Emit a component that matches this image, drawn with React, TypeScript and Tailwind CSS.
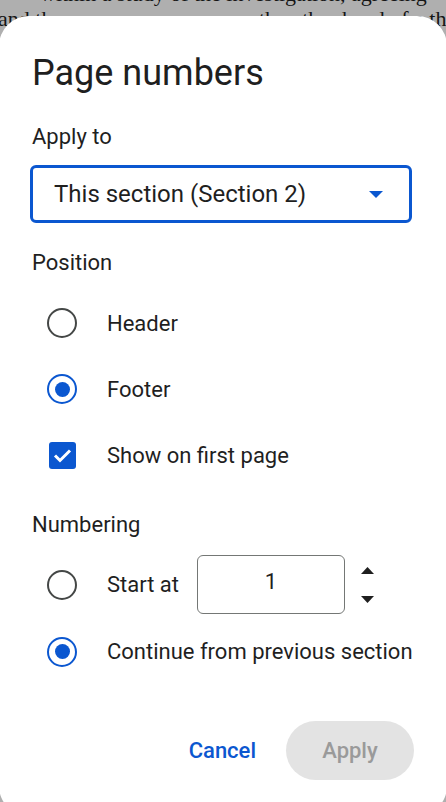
import React from "react";

const font = { fontFamily: "Roboto, 'Noto Sans', sans-serif" };

function Radio({ checked }: { checked?: boolean }) {
  return checked ? (
    <div className="w-[30px] h-[30px] rounded-full border-[2.5px] border-[#0b57d0] flex items-center justify-center">
      <div className="w-[15px] h-[15px] rounded-full bg-[#0b57d0]" />
    </div>
  ) : (
    <div className="w-[30px] h-[30px] rounded-full border-[2.5px] border-[#444746]" />
  );
}

export default function App() {
  return (
    <div className="relative w-[446px] h-[802px] overflow-hidden bg-[#afafaf]" style={font}>
      <div
        className="absolute left-0 top-0 w-[446px] text-[22px] text-[#151515] whitespace-nowrap overflow-hidden"
        style={{ fontFamily: "'Liberation Serif', serif" }}
      >
        <div className="h-[24px] leading-[24px] -mt-[18px] pl-[40px]">within a study of the investigation, agreeing</div>
        <div className="h-[24px] leading-[24px] mt-[1px] -ml-[2px]">and the numerous sources on the other hand of a the survey</div>
      </div>
      <div className="relative mt-[16px] -mx-[1px] h-[800px] rounded-[30px] bg-white px-[33px] pt-[35px]">
        <div className="text-[36px] leading-[44px] text-[#1f1f1f]">Page numbers</div>
        <div className="mt-[28px] text-[22px] leading-[28px] text-[#1f1f1f]">Apply to</div>
        <div className="mt-[14px] -ml-[2px] w-[382px] h-[58px] rounded-[6px] border-[3px] border-[#0b57d0] flex items-center pl-[21px] pr-[26px]">
          <span className="flex-1 text-[24px] text-[#1f1f1f]">This section (Section 2)</span>
          <svg width="14" height="7" viewBox="0 0 14 7">
            <path d="M0 0 L14 0 L7 7 Z" fill="#0b57d0" />
          </svg>
        </div>
        <div className="mt-[26px] text-[22px] leading-[28px] text-[#1f1f1f]">Position</div>
        <div className="mt-[13px]">
          <div className="h-[66px] flex items-center">
            <div className="ml-[15px]"><Radio /></div>
            <span className="ml-[30px] text-[22px] text-[#1f1f1f]">Header</span>
          </div>
          <div className="h-[66px] flex items-center">
            <div className="ml-[15px]"><Radio checked /></div>
            <span className="ml-[30px] text-[22px] text-[#1f1f1f]">Footer</span>
          </div>
          <div className="h-[66px] flex items-center">
            <div className="ml-[17px] w-[27px] h-[27px] rounded-[3px] bg-[#0b57d0] flex items-center justify-center">
              <svg width="19" height="15" viewBox="0 0 19 15">
                <path d="M2 7.5 L7 12.5 L17 2.5" stroke="white" strokeWidth="3" fill="none" />
              </svg>
            </div>
            <span className="ml-[31px] text-[22px] text-[#1f1f1f]">Show on first page</span>
          </div>
        </div>
        <div className="mt-[23px] text-[22px] leading-[28px] text-[#1f1f1f]">Numbering</div>
        <div className="mt-[12px]">
          <div className="h-[67px] flex items-center">
            <div className="ml-[15px]"><Radio /></div>
            <span className="ml-[30px] text-[22px] text-[#1f1f1f]">Start at</span>
            <div className="ml-[18px] w-[148px] h-[59px] rounded-[6px] border border-[#747775] flex items-center justify-center pb-[6px]">
              <span className="text-[22px] text-[#1f1f1f]">1</span>
            </div>
            <div className="ml-[16px] flex flex-col items-center gap-[22px]">
              <svg width="13" height="7" viewBox="0 0 13 7"><path d="M0 7 L13 7 L6.5 0 Z" fill="#1f1f1f" /></svg>
              <svg width="13" height="7" viewBox="0 0 13 7"><path d="M0 0 L13 0 L6.5 7 Z" fill="#1f1f1f" /></svg>
            </div>
          </div>
          <div className="h-[67px] flex items-center">
            <div className="ml-[15px]"><Radio checked /></div>
            <span className="ml-[30px] text-[22px] text-[#1f1f1f]">Continue from previous section</span>
          </div>
        </div>
        <div className="mt-[36px] flex justify-end items-center">
          <span className="text-[22px] font-medium text-[#0b57d0]">Cancel</span>
          <div className="ml-[30px] w-[128px] h-[59px] rounded-full bg-[#e3e3e3] flex items-center justify-center">
            <span className="text-[22px] font-medium text-[#9a9a9a]">Apply</span>
          </div>
        </div>
      </div>
    </div>
  );
}
